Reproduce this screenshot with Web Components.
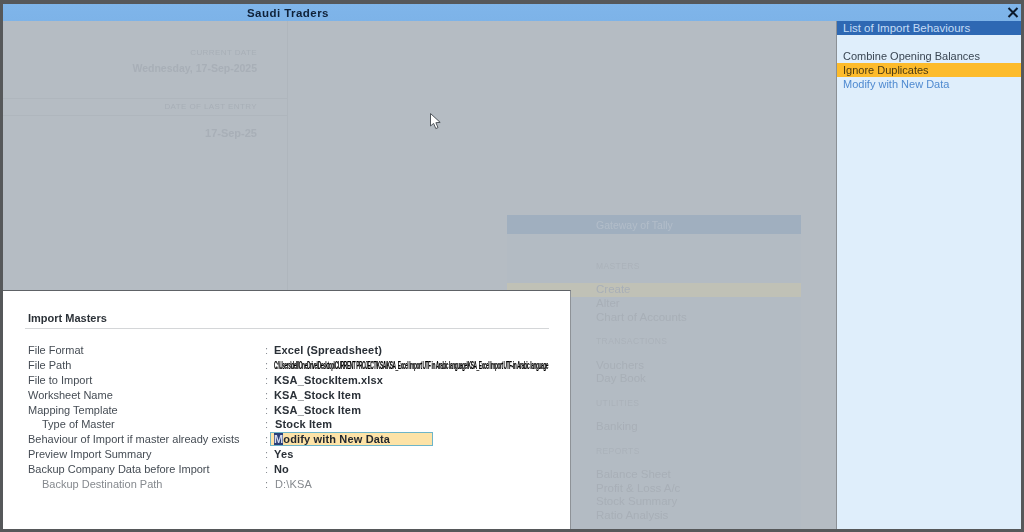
<!DOCTYPE html>
<html>
<head>
<meta charset="utf-8">
<title>Import Masters</title>
<style>
  html, body { margin: 0; height: 100%; background: #56585a; }
  body { font-family: "Liberation Sans", Arial, sans-serif; overflow: hidden; }
</style>
</head>
<body>
<tally-app company="Saudi Traders">
  <tally-desk></tally-desk>
  <import-form title-text="Import Masters">
    <field-row label="File Format" value="Excel (Spreadsheet)"></field-row>
    <field-row label="File Path" value="C:\Users\dell\OneDrive\Desktop\CURRENT PROJECT\KSA\KSA_Excel Import UTF in Arabic language\KSA_Excel Import UTF-in Arabic language" squeeze></field-row>
    <field-row label="File to Import" value="KSA_StockItem.xlsx"></field-row>
    <field-row label="Worksheet Name" value="KSA_Stock Item"></field-row>
    <field-row label="Mapping Template" value="KSA_Stock Item"></field-row>
    <field-row label="Type of Master" value="Stock Item" sub></field-row>
    <field-row label="Behaviour of Import if master already exists" value="Modify with New Data" editing></field-row>
    <field-row label="Preview Import Summary" value="Yes"></field-row>
    <field-row label="Backup Company Data before Import" value="No"></field-row>
    <field-row label="Backup Destination Path" value="D:\KSA" sub muted></field-row>
  </import-form>
  <behaviour-list slot="side" heading="List of Import Behaviours">
    <list-item>Combine Opening Balances</list-item>
    <list-item selected>Ignore Duplicates</list-item>
    <list-item current>Modify with New Data</list-item>
  </behaviour-list>
</tally-app>

<script>
class TallyApp extends HTMLElement{
    constructor(){
        super();
        this.attachShadow({mode: 'open'});
        this.shadowRoot.innerHTML = `
            <style>
                :host{
                    display: flex;
                    flex-direction: column;
                    height: 532px;
                    box-sizing: border-box;
                    padding: 4px 3px 3px 3px;
                }
                .title{
                    flex: none;
                    height: 17px;
                    background: linear-gradient(#7fb5ea, #7db3e8);
                    display: flex;
                    align-items: center;
                    position: relative;
                    font-size: 11.5px;
                    font-weight: bold;
                    letter-spacing: .45px;
                    color: #0f2138;
                    padding-left: 244px;
                }
                .title span{ filter: blur(.3px); }
                .close{
                    position: absolute;
                    right: 1px;
                    top: 2px;
                    width: 14px;
                    height: 14px;
                }
                .body{
                    flex: 1;
                    display: flex;
                    min-height: 0;
                }
                .main{
                    flex: 1;
                    position: relative;
                    overflow: hidden;
                    background: #b5bcc3;
                }
                ::slotted([slot=side]){
                    flex: none;
                }
            </style>
            <div class="title"><span id="company"></span>
                <svg class="close" viewBox="0 0 14 14"><path d="M2.5 2 L11.5 11 M11.5 2 L2.5 11" stroke="#0c1a2c" stroke-width="2" fill="none"/></svg>
            </div>
            <div class="body">
                <div class="main"><slot></slot></div>
                <slot name="side"></slot>
            </div>`;
    }
    connectedCallback(){
        this.shadowRoot.querySelector('#company').textContent = this.getAttribute('company');
    }
}

// the dimmed screen behind the form
class TallyDesk extends HTMLElement{
    constructor(){
        super();
        this.attachShadow({mode: 'open'});
        this.shadowRoot.innerHTML = `
            <style>
                :host{
                    display: flex;
                    height: 100%;
                    color: #a8afb7;
                    font-size: 11px;
                }
                .left{
                    flex: none;
                    width: 284px;
                    border-right: 1px solid #afb6bd;
                    text-align: right;
                    filter: blur(.6px);
                }
                .left div{ padding-right: 30px; }
                .cap{ font-size: 8px; letter-spacing: .4px; }
                .date{ font-size: 10.5px; font-weight: bold; margin-top: 5px; height: 24px; }
                .date.short{ font-size: 11px; margin-top: 11px; }
                .band{
                    height: 18px;
                    line-height: 16px;
                    box-sizing: border-box;
                    border-top: 1px solid #afb6bd;
                    border-bottom: 1px solid #afb6bd;
                }
                .right{
                    flex: 1;
                    padding: 194px 0 0 219px;
                    display: flex;
                    align-items: stretch;
                }
                .gateway{
                    width: 294px;
                    background: #b3bbc3;
                    filter: blur(.5px);
                }
                .head{
                    height: 19px;
                    background: #a0afbf;
                    color: #b2bdc9;
                    padding-left: 89px;
                    line-height: 20px;
                    font-size: 10.5px;
                }
                .menu{
                    padding-top: 26px;
                    font-size: 11.5px;
                    line-height: 13.7px;
                }
                .menu div{ padding-left: 89px; }
                .menu .grp{ font-size: 8.5px; letter-spacing: .4px; color: #abb2ba; margin-bottom: 9.5px; }
                .menu .gap{ margin-top: 11px; }
                .menu .on{ background: #c0c1b6; }
            </style>
            <div class="left">
                <div class="cap" style="margin-top:27px">CURRENT DATE</div>
                <div class="date">Wednesday, 17-Sep-2025</div>
                <div style="height:12px"></div>
                <div class="band cap">DATE OF LAST ENTRY</div>
                <div class="date short">17-Sep-25</div>
            </div>
            <div class="right">
                <div class="gateway">
                    <div class="head">Gateway of Tally</div>
                    <div class="menu">
                        <div class="grp">MASTERS</div>
                        <div class="on">Create</div>
                        <div>Alter</div>
                        <div>Chart of Accounts</div>
                        <div class="grp gap">TRANSACTIONS</div>
                        <div>Vouchers</div>
                        <div>Day Book</div>
                        <div class="grp gap">UTILITIES</div>
                        <div>Banking</div>
                        <div class="grp gap">REPORTS</div>
                        <div>Balance Sheet</div>
                        <div>Profit &amp; Loss A/c</div>
                        <div>Stock Summary</div>
                        <div>Ratio Analysis</div>
                    </div>
                </div>
            </div>`;
    }
}

class ImportForm extends HTMLElement{
    constructor(){
        super();
        this.attachShadow({mode: 'open'});
        this.shadowRoot.innerHTML = `
            <style>
                :host{
                    position: absolute;
                    left: 0;
                    bottom: 0;
                    width: 568px;
                    height: 239px;
                    box-sizing: border-box;
                    background: #fff;
                    border-top: 1px solid #5e6266;
                    border-right: 1px solid #8e9297;
                    padding: 20px 21px 0 22px;
                }
                h1{
                    margin: 0 0 0 3px;
                    font-size: 11px;
                    font-weight: bold;
                    line-height: 14px;
                    color: #2c3238;
                    filter: blur(.3px);
                }
                .rule{
                    height: 1px;
                    background: #d4d6d8;
                    margin: 3px 0 14px 0;
                }
                .rows{ padding-left: 3px; }
            </style>
            <h1 id="t"></h1>
            <div class="rule"></div>
            <div class="rows"><slot></slot></div>`;
    }
    connectedCallback(){
        this.shadowRoot.querySelector('#t').textContent = this.getAttribute('title-text');
    }
}

class FieldRow extends HTMLElement{
    constructor(){
        super();
        this.attachShadow({mode: 'open'});
        this.shadowRoot.innerHTML = `
            <style>
                :host{
                    display: grid;
                    grid-template-columns: 237px 9px 1fr;
                    height: 14.9px;
                    line-height: 14.9px;
                    font-size: 11px;
                    color: #454c54;
                    white-space: nowrap;
                }
                .label, .colon{ filter: blur(.3px); }
                :host([sub]) .label{ padding-left: 14px; }
                :host([muted]) .label, :host([muted]) .colon, :host([muted]) .value{ color: #85898e; }
                .colon{ color: #8b9096; }
                .value{
                    font-weight: bold;
                    font-size: 11px;
                    color: #2a3037;
                    letter-spacing: .15px;
                    min-width: 0;
                    filter: blur(.3px);
                }
                :host([sub]) .value{ padding-left: 1px; }
                :host([muted]) .value{ font-weight: normal; }
                :host([squeeze]) .value{ filter: none; }
                :host([squeeze]) .value span{
                    display: inline-block;
                    color: #000;
                    letter-spacing: -1px;
                    -webkit-text-stroke: .2px #000;
                    transform-origin: 0 50%;
                }
                :host([editing]) .value{
                    margin-left: -4px;
                    padding-left: 3px;
                    width: 158px;
                    height: 12px;
                    line-height: 13px;
                    background: #fde3a7;
                    border: 1px solid #6db5c9;
                    color: #23282e;
                }
                .caret{
                    background: #2a3f77;
                    color: #d5dcf0;
                }
            </style>
            <span class="label"></span><span class="colon">:</span><span class="value"></span>`;
    }
    connectedCallback(){
        const root = this.shadowRoot;
        const text = this.getAttribute('value');
        root.querySelector('.label').textContent = this.getAttribute('label');
        const value = root.querySelector('.value');
        if(this.hasAttribute('editing')){
            const caret = document.createElement('span');
            caret.className = 'caret';
            caret.textContent = text[0];
            value.append(caret, text.slice(1));
        }else if(this.hasAttribute('squeeze')){
            const s = document.createElement('span');
            s.textContent = text;
            value.appendChild(s);
            s.style.transform = 'scaleX(' + (274 / s.getBoundingClientRect().width) + ')';
        }else{
            value.textContent = text;
        }
    }
}

class BehaviourList extends HTMLElement{
    constructor(){
        super();
        this.attachShadow({mode: 'open'});
        this.shadowRoot.innerHTML = `
            <style>
                :host{
                    display: block;
                    width: 185px;
                    box-sizing: border-box;
                    background: #dfeefb;
                    border-left: 1px solid #8b9095;
                }
                .head{
                    height: 14px;
                    line-height: 14px;
                    background: #2e68b3;
                    color: #c4dcf6;
                    font-size: 11.5px;
                    padding-left: 6px;
                }
                .items{ padding-top: 14px; filter: blur(.3px); }
            </style>
            <div class="head" id="h"></div>
            <div class="items"><slot></slot></div>`;
    }
    connectedCallback(){
        this.shadowRoot.querySelector('#h').textContent = this.getAttribute('heading');
    }
}

class ListItem extends HTMLElement{
    constructor(){
        super();
        this.attachShadow({mode: 'open'});
        this.shadowRoot.innerHTML = `
            <style>
                :host{
                    display: block;
                    height: 14px;
                    line-height: 14px;
                    padding-left: 6px;
                    font-size: 11px;
                    color: #3a4653;
                }
                :host([selected]){ background: #fdbb2b; color: #4a3a12; }
                :host([current]){ color: #4f8ad0; }
            </style>
            <slot></slot>`;
    }
}

class MousePointer extends HTMLElement{
    constructor(){
        super();
        this.attachShadow({mode: 'open'});
        this.shadowRoot.innerHTML = `
            <style>
                :host{ position: absolute; left: 429px; top: 112px; width: 14px; height: 19px; }
            </style>
            <svg width="14" height="19" viewBox="0 0 14 19"><path d="M1.5 1.5 L1.5 14 L4.6 11.4 L6.8 16.6 L9 15.6 L6.9 10.7 L11.2 10.4 Z" fill="#fff" stroke="#50565c" stroke-width="1"/></svg>`;
    }
}

customElements.define('tally-app', TallyApp);
customElements.define('tally-desk', TallyDesk);
customElements.define('import-form', ImportForm);
customElements.define('field-row', FieldRow);
customElements.define('behaviour-list', BehaviourList);
customElements.define('list-item', ListItem);
customElements.define('mouse-pointer', MousePointer);
document.body.appendChild(document.createElement('mouse-pointer'));
</script>
</body>
</html>
